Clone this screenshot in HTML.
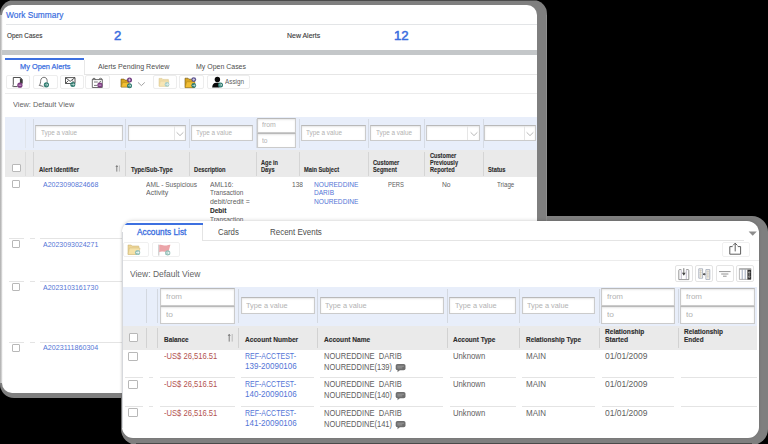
<!DOCTYPE html><html><head><meta charset="utf-8"><title>Work Summary</title><style>
html,body{margin:0;padding:0;background:#000;width:768px;height:444px;overflow:hidden}
body{position:relative;font-family:"Liberation Sans", sans-serif}
.a{position:absolute}
svg.a{overflow:visible}
.t{position:absolute;white-space:pre;line-height:0;height:0;transform-origin:0 0;-webkit-text-stroke:0px currentColor}

</style></head><body>
<div class="a" style="left:120.50px;top:215.80px;width:647.10px;height:228.80px;background:#7f7f7f;border-radius:16px"></div>
<div class="a" style="left:136.00px;top:443.20px;width:616.00px;height:0.80px;background:#4a4a4a"></div>
<div class="a" style="left:0.00px;top:0.00px;width:547.20px;height:397.60px;background:#7f7f7f;border-radius:14px"></div>
<div class="a" style="left:10.00px;top:0.00px;width:526.00px;height:0.90px;background:#4a4a4a"></div>
<div class="a" style="left:1.80px;top:5.00px;width:535.70px;height:387.60px;background:#fff;border-radius:10px"></div>
<div class="a" style="left:0.00px;top:15.00px;width:2.80px;height:368.00px;background:linear-gradient(to right,#b3b3b3 0px,#bcbcbc 1px,#e6e6e6 2px,#fff 2.8px)"></div>
<div class="a" style="left:545.60px;top:15.00px;width:1.00px;height:369.00px;background:#8e8e8e"></div>
<div class="t" style="left:6.20px;top:15px;font-size:9.8px;color:#3a6ee0;font-weight:400;transform:scale(0.8524,1.0000);transform-origin:0 3px;-webkit-text-stroke:0.2px currentColor">Work Summary</div>
<div class="a" style="left:5.60px;top:23.60px;width:531.90px;height:1.40px;background:#e3e5e7"></div>
<div class="t" style="left:6.80px;top:36px;font-size:6.9px;color:#3a3a3a;font-weight:400;transform:scale(0.9229,1.0000);transform-origin:0 2px;-webkit-text-stroke:0.12px currentColor">Open Cases</div>
<div class="t" style="left:113.90px;top:36px;font-size:13.5px;color:#3a6ee0;font-weight:400;transform:scale(0.9726,1.0000);transform-origin:0 4px;-webkit-text-stroke:0.55px currentColor">2</div>
<div class="t" style="left:286.70px;top:36px;font-size:6.9px;color:#3a3a3a;font-weight:400;transform:scale(1.0099,1.0000);transform-origin:0 2px;-webkit-text-stroke:0.12px currentColor">New Alerts</div>
<div class="t" style="left:394.40px;top:36px;font-size:13.5px;color:#3a6ee0;font-weight:400;transform:scale(0.9726,1.0000);transform-origin:0 4px;-webkit-text-stroke:0.55px currentColor">12</div>
<div class="a" style="left:1.80px;top:50.40px;width:535.70px;height:5.00px;background:#c4c7c9"></div>
<div class="a" style="left:5.30px;top:58.10px;width:78.70px;height:2.10px;background:#3d70e0"></div>
<div class="a" style="left:83.80px;top:60.00px;width:1.00px;height:14.00px;background:#e8e8e8"></div>
<div class="a" style="left:84.00px;top:73.50px;width:453.20px;height:1.00px;background:#e6e6e6"></div>
<div class="t" style="left:19.50px;top:67px;font-size:7.8px;color:#3a6ee0;font-weight:400;transform:scale(0.9471,1.0000);transform-origin:0 2px;-webkit-text-stroke:0.25px currentColor">My Open Alerts</div>
<div class="t" style="left:97.60px;top:67px;font-size:7.8px;color:#4e4e4e;font-weight:400;transform:scale(0.9097,1.0000);transform-origin:0 2px;">Alerts Pending Review</div>
<div class="t" style="left:196.00px;top:67px;font-size:7.8px;color:#4e4e4e;font-weight:400;transform:scale(0.8942,1.0000);transform-origin:0 2px;">My Open Cases</div>
<div class="a" style="left:5.90px;top:74.80px;width:24.50px;height:14.50px;background:#fff;border:1px solid #ededed;box-sizing:border-box;border-radius:2px"></div>
<div class="a" style="left:32.50px;top:74.80px;width:25.00px;height:14.50px;background:#fff;border:1px solid #ededed;box-sizing:border-box;border-radius:2px"></div>
<div class="a" style="left:59.50px;top:74.80px;width:24.50px;height:14.50px;background:#fff;border:1px solid #ededed;box-sizing:border-box;border-radius:2px"></div>
<div class="a" style="left:85.40px;top:74.80px;width:25.00px;height:14.50px;background:#fff;border:1px solid #ededed;box-sizing:border-box;border-radius:2px"></div>
<div class="a" style="left:153.00px;top:74.80px;width:24.00px;height:14.50px;background:#fff;border:1px solid #ededed;box-sizing:border-box;border-radius:2px"></div>
<div class="a" style="left:179.40px;top:74.80px;width:24.80px;height:14.50px;background:#fff;border:1px solid #ededed;box-sizing:border-box;border-radius:2px"></div>
<div class="a" style="left:206.80px;top:74.80px;width:43.40px;height:14.50px;background:#fff;border:1px solid #ededed;box-sizing:border-box;border-radius:2px"></div>
<div class="a" style="left:5.40px;top:93.20px;width:532.10px;height:1.00px;background:#ececec"></div>
<div class="t" style="left:225.00px;top:82px;font-size:7.2px;color:#606060;font-weight:400;transform:scale(0.8793,1.0000);transform-origin:0 2px;">Assign</div>
<div class="t" style="left:13.40px;top:105px;font-size:7.4px;color:#646464;font-weight:400;transform:scale(0.9976,1.0000);transform-origin:0 2px;">View: Default View</div>
<svg class="a" style="left:0;top:0" width="768" height="444" viewBox="0 0 768 444"><path d="M13.3 77.5 H20.3 L22.2 79.3 V83.6 M13.3 77.5 V84.4 Q13.3 85.5 12.5 86.1 Q12.7 86.6 13.4 86.6 H17.6" fill="none" stroke="#333" stroke-width="0.85"/><path d="M19.9 77.9 L22.3 79.4 V83.6 H19.9 Z" fill="#3c3c3c"/><circle cx="19.90" cy="85.20" r="2.6" fill="#7c3b80"/><path d="M18.47 85.20 H21.33" stroke="#d8b8da" stroke-width="0.9"/><path d="M39.2 85.4 C40.5 84.2 40.5 82 40.7 80.3 C41 78.3 42.4 77.3 44 77.3 C45.6 77.3 46.9 78.3 47.1 80.3 C47.2 81.4 47.2 82.1 47.3 82.6 M39.2 85.4 L42.6 86.2 L43.8 87.4" fill="none" stroke="#555" stroke-width="0.8"/><circle cx="46.40" cy="84.80" r="2.6" fill="#2d7a6e"/><path d="M44.84 84.80 H47.96 M46.40 83.63 L47.96 84.80 L46.40 85.97" stroke="#cfe3df" stroke-width="0.7" fill="none"/><path d="M65.5 77.6 H75 V83.5 H65.5 Z M65.6 77.7 L70.2 81.3 L74.9 77.7 M65.6 83.3 L68.4 80.6 M74.9 83.3 L72.1 80.6" fill="none" stroke="#3a3a3a" stroke-width="0.85"/><circle cx="72.80" cy="84.50" r="2.5" fill="#2d7a6e"/><path d="M71.30 84.50 H74.30 M72.80 83.38 L74.30 84.50 L72.80 85.62" stroke="#cfe3df" stroke-width="0.7" fill="none"/><path d="M92.3 79.6 H102.3 V87.5 H92.3 Z" fill="none" stroke="#555" stroke-width="0.85"/><path d="M92.4 79.6 C92.6 77.8 95.4 77.8 95.6 79.6 M99 79.6 C99.2 77.8 102 77.8 102.2 79.6" fill="none" stroke="#555" stroke-width="0.85"/><path d="M94 82 H97.8 M94 85.4 H97.4 M98.6 82.8 L101 81.2" stroke="#555" stroke-width="0.8"/><circle cx="99.90" cy="85.10" r="2.6" fill="#7c3b80"/><path d="M98.47 85.10 H101.33" stroke="#d8b8da" stroke-width="0.9"/><path d="M121 79.1 H124 L125 80.1 H128.6 V87 H121 Z" fill="#d9a521" stroke="#6b5212" stroke-width="0.6"/><path d="M122.6 82.4 H129.4 L127.8 87 H121.2 Z" fill="#f2be33" stroke="#9a7616" stroke-width="0.4"/><circle cx="129.50" cy="80.00" r="2.5" fill="#6f3a7e"/><path d="M128.12 80.00 H130.88 M129.50 78.62 V81.38" stroke="#e0cfe6" stroke-width="0.8"/><circle cx="129.50" cy="85.70" r="2.5" fill="#2d7a6e"/><path d="M128.00 85.70 H131.00 M129.50 84.58 L131.00 85.70 L129.50 86.83" stroke="#cfe3df" stroke-width="0.7" fill="none"/><path d="M138 82.4 L141.4 85.6 L144.8 82.4" fill="none" stroke="#8a8a8a" stroke-width="0.8"/><path d="M159 78.4 H162 L163 79.4 H168.4 V86.2 H159 Z" fill="#efdca8" stroke="#d9c48a" stroke-width="0.5"/><path d="M160.4 81.2 H169 L167.8 86.2 H159.2 Z" fill="#f7e6b6" stroke="#e0cc94" stroke-width="0.4"/><circle cx="167.00" cy="84.40" r="2.4" fill="#a9cfc9"/><path d="M165.56 84.40 H168.44 M167.00 83.32 L168.44 84.40 L167.00 85.48" stroke="#e8f2f0" stroke-width="0.7" fill="none"/><path d="M185 78.2 H188 L189 79.2 H194.5 V87.6 H185 Z" fill="#d9a521" stroke="#6b5212" stroke-width="0.6"/><path d="M186.6 81.8 H195 L193.6 87.6 H185.2 Z" fill="#f2be33" stroke="#9a7616" stroke-width="0.4"/><circle cx="193.75" cy="79.60" r="2.4" fill="#5c5490"/><path d="M192.43 79.60 H195.07 M193.75 78.28 V80.92" stroke="#dcd8ee" stroke-width="0.8"/><circle cx="193.75" cy="85.50" r="2.4" fill="#2d7a6e"/><path d="M192.31 85.50 H195.19 M193.75 84.42 L195.19 85.50 L193.75 86.58" stroke="#cfe3df" stroke-width="0.7" fill="none"/><circle cx="217.4" cy="79.5" r="2.7" fill="#0a0a0a"/><path d="M212.2 87.6 C212.2 84.4 213.8 82.8 216.2 82.8 H218.6 C219.6 82.8 220.4 83.2 220.8 83.8 L219.4 87.6 Z" fill="#0a0a0a"/><circle cx="220.50" cy="84.90" r="2.5" fill="#2d7a6e"/><path d="M219.00 84.90 H222.00 M220.50 83.78 L222.00 84.90 L220.50 86.03" stroke="#cfe3df" stroke-width="0.7" fill="none"/></svg>
<div class="a" style="left:5.40px;top:116.50px;width:532.10px;height:33.90px;background:#e8eefa"></div>
<div class="a" style="left:5.40px;top:150.40px;width:532.10px;height:26.90px;background:#eaeaea"></div>
<div class="a" style="left:25.20px;top:118.50px;width:1.00px;height:29.00px;background:#e0e4eb"></div>
<div class="a" style="left:25.20px;top:152.20px;width:1.00px;height:23.40px;background:#dcdcdc"></div>
<div class="a" style="left:33.30px;top:118.50px;width:1.00px;height:29.00px;background:#d6dbe4"></div>
<div class="a" style="left:33.30px;top:152.20px;width:1.00px;height:23.40px;background:#d5d5d5"></div>
<div class="a" style="left:125.30px;top:118.50px;width:1.00px;height:29.00px;background:#d6dbe4"></div>
<div class="a" style="left:125.30px;top:152.20px;width:1.00px;height:23.40px;background:#d5d5d5"></div>
<div class="a" style="left:188.70px;top:118.50px;width:1.00px;height:29.00px;background:#d6dbe4"></div>
<div class="a" style="left:188.70px;top:152.20px;width:1.00px;height:23.40px;background:#d5d5d5"></div>
<div class="a" style="left:255.50px;top:118.50px;width:1.00px;height:29.00px;background:#d6dbe4"></div>
<div class="a" style="left:255.50px;top:152.20px;width:1.00px;height:23.40px;background:#d5d5d5"></div>
<div class="a" style="left:298.70px;top:118.50px;width:1.00px;height:29.00px;background:#d6dbe4"></div>
<div class="a" style="left:298.70px;top:152.20px;width:1.00px;height:23.40px;background:#d5d5d5"></div>
<div class="a" style="left:368.00px;top:118.50px;width:1.00px;height:29.00px;background:#d6dbe4"></div>
<div class="a" style="left:368.00px;top:152.20px;width:1.00px;height:23.40px;background:#d5d5d5"></div>
<div class="a" style="left:424.30px;top:118.50px;width:1.00px;height:29.00px;background:#d6dbe4"></div>
<div class="a" style="left:424.30px;top:152.20px;width:1.00px;height:23.40px;background:#d5d5d5"></div>
<div class="a" style="left:482.50px;top:118.50px;width:1.00px;height:29.00px;background:#d6dbe4"></div>
<div class="a" style="left:482.50px;top:152.20px;width:1.00px;height:23.40px;background:#d5d5d5"></div>
<div class="a" style="left:35.40px;top:125.20px;width:87.20px;height:15.40px;background:#fff;border:1px solid #cbcbcb;border-top-color:#b9b9b9;box-sizing:border-box;box-shadow:inset 0 1px 2px rgba(0,0,0,.1)"></div>
<div class="t" style="left:40.60px;top:133px;font-size:6.8px;color:#b2b2b2;font-weight:400;transform:scale(0.9337,1.0000);transform-origin:0 2px;">Type a value</div>
<div class="a" style="left:127.50px;top:125.20px;width:58.80px;height:15.40px;background:#fff;border:1px solid #cbcbcb;border-top-color:#b9b9b9;box-sizing:border-box;box-shadow:inset 0 1px 2px rgba(0,0,0,.1)"></div>
<div class="a" style="left:174.00px;top:126.20px;width:1.00px;height:13.40px;background:#e6e6e6"></div>
<svg class="a" style="left:175.35px;top:130.80px" width="10" height="6" viewBox="0 0 10 6"><path d="M1.6 1.3 L5 4.6 L8.4 1.3" fill="none" stroke="#ababab" stroke-width="0.85"/></svg>
<div class="a" style="left:191.00px;top:125.20px;width:62.00px;height:15.40px;background:#fff;border:1px solid #cbcbcb;border-top-color:#b9b9b9;box-sizing:border-box;box-shadow:inset 0 1px 2px rgba(0,0,0,.1)"></div>
<div class="t" style="left:196.20px;top:133px;font-size:6.8px;color:#b2b2b2;font-weight:400;transform:scale(0.9337,1.0000);transform-origin:0 2px;">Type a value</div>
<div class="a" style="left:257.30px;top:117.50px;width:38.60px;height:15.70px;background:#fff;border:1px solid #cbcbcb;border-top-color:#b9b9b9;box-sizing:border-box;box-shadow:inset 0 1px 2px rgba(0,0,0,.1)"></div>
<div class="t" style="left:262.40px;top:125px;font-size:6.8px;color:#b2b2b2;font-weight:400;transform:scale(1.0147,1.0000);transform-origin:0 2px;">from</div>
<div class="a" style="left:257.30px;top:133.20px;width:38.60px;height:15.20px;background:#fff;border:1px solid #cbcbcb;border-top-color:#b9b9b9;box-sizing:border-box;box-shadow:inset 0 1px 2px rgba(0,0,0,.1)"></div>
<div class="t" style="left:262.40px;top:141px;font-size:6.8px;color:#b2b2b2;font-weight:400;transform:scale(0.9698,1.0000);transform-origin:0 2px;">to</div>
<div class="a" style="left:300.50px;top:125.20px;width:65.00px;height:15.40px;background:#fff;border:1px solid #cbcbcb;border-top-color:#b9b9b9;box-sizing:border-box;box-shadow:inset 0 1px 2px rgba(0,0,0,.1)"></div>
<div class="t" style="left:305.70px;top:133px;font-size:6.8px;color:#b2b2b2;font-weight:400;transform:scale(0.9337,1.0000);transform-origin:0 2px;">Type a value</div>
<div class="a" style="left:370.40px;top:125.20px;width:50.80px;height:15.40px;background:#fff;border:1px solid #cbcbcb;border-top-color:#b9b9b9;box-sizing:border-box;box-shadow:inset 0 1px 2px rgba(0,0,0,.1)"></div>
<div class="t" style="left:375.60px;top:133px;font-size:6.8px;color:#b2b2b2;font-weight:400;transform:scale(0.9337,1.0000);transform-origin:0 2px;">Type a value</div>
<div class="a" style="left:426.10px;top:125.20px;width:53.70px;height:15.40px;background:#fff;border:1px solid #cbcbcb;border-top-color:#b9b9b9;box-sizing:border-box;box-shadow:inset 0 1px 2px rgba(0,0,0,.1)"></div>
<div class="a" style="left:467.30px;top:126.20px;width:1.00px;height:13.40px;background:#e6e6e6"></div>
<svg class="a" style="left:468.75px;top:130.80px" width="10" height="6" viewBox="0 0 10 6"><path d="M1.6 1.3 L5 4.6 L8.4 1.3" fill="none" stroke="#ababab" stroke-width="0.85"/></svg>
<div class="a" style="left:484.30px;top:125.20px;width:51.30px;height:15.40px;background:#fff;border:1px solid #cbcbcb;border-top-color:#b9b9b9;box-sizing:border-box;box-shadow:inset 0 1px 2px rgba(0,0,0,.1)"></div>
<div class="a" style="left:523.50px;top:126.20px;width:1.00px;height:13.40px;background:#e6e6e6"></div>
<svg class="a" style="left:524.75px;top:130.80px" width="10" height="6" viewBox="0 0 10 6"><path d="M1.6 1.3 L5 4.6 L8.4 1.3" fill="none" stroke="#ababab" stroke-width="0.85"/></svg>
<div class="a" style="left:12.20px;top:164.30px;width:8.50px;height:8.20px;background:#fff;border:1px solid #b8b8b8;box-sizing:border-box;border-radius:1px"></div>
<div class="t" style="left:38.90px;top:170px;font-size:6.8px;color:#2c2c2c;font-weight:700;transform:scale(0.8699,1.0000);transform-origin:0 2px;-webkit-text-stroke:0.12px currentColor;">Alert Identifier</div>
<div class="t" style="left:130.80px;top:170px;font-size:6.8px;color:#2c2c2c;font-weight:700;transform:scale(0.8737,1.0000);transform-origin:0 2px;-webkit-text-stroke:0.12px currentColor;">Type/Sub-Type</div>
<div class="t" style="left:194.30px;top:170px;font-size:6.8px;color:#2c2c2c;font-weight:700;transform:scale(0.8448,1.0000);transform-origin:0 2px;-webkit-text-stroke:0.12px currentColor;">Description</div>
<div class="t" style="left:260.80px;top:163px;font-size:6.8px;color:#2c2c2c;font-weight:700;transform:scale(0.8181,1.0000);transform-origin:0 2px;-webkit-text-stroke:0.12px currentColor;">Age in</div>
<div class="t" style="left:260.80px;top:170px;font-size:6.8px;color:#2c2c2c;font-weight:700;transform:scale(0.8365,1.0000);transform-origin:0 2px;-webkit-text-stroke:0.12px currentColor;">Days</div>
<div class="t" style="left:303.90px;top:170px;font-size:6.8px;color:#2c2c2c;font-weight:700;transform:scale(0.8369,1.0000);transform-origin:0 2px;-webkit-text-stroke:0.12px currentColor;">Main Subject</div>
<div class="t" style="left:373.40px;top:163px;font-size:6.8px;color:#2c2c2c;font-weight:700;transform:scale(0.8285,1.0000);transform-origin:0 2px;-webkit-text-stroke:0.12px currentColor;">Customer</div>
<div class="t" style="left:373.40px;top:170px;font-size:6.8px;color:#2c2c2c;font-weight:700;transform:scale(0.8288,1.0000);transform-origin:0 2px;-webkit-text-stroke:0.12px currentColor;">Segment</div>
<div class="t" style="left:430.00px;top:156px;font-size:6.8px;color:#2c2c2c;font-weight:700;transform:scale(0.8254,1.0000);transform-origin:0 2px;-webkit-text-stroke:0.12px currentColor;">Customer</div>
<div class="t" style="left:430.00px;top:163px;font-size:6.8px;color:#2c2c2c;font-weight:700;transform:scale(0.8141,1.0000);transform-origin:0 2px;-webkit-text-stroke:0.12px currentColor;">Previously</div>
<div class="t" style="left:430.00px;top:170px;font-size:6.8px;color:#2c2c2c;font-weight:700;transform:scale(0.8310,1.0000);transform-origin:0 2px;-webkit-text-stroke:0.12px currentColor;">Reported</div>
<div class="t" style="left:487.50px;top:170px;font-size:6.8px;color:#2c2c2c;font-weight:700;transform:scale(0.8421,1.0000);transform-origin:0 2px;-webkit-text-stroke:0.12px currentColor;">Status</div>
<svg class="a" style="left:0;top:0" width="768" height="444" viewBox="0 0 768 444"><path d="M116.8 171.6 V165.8 M115.9 166.9 L116.8 165.6 L117.7 166.9" stroke="#555" stroke-width="0.7" fill="none"/><path d="M119.4 165.4 V171.6" stroke="#aaa" stroke-width="0.7"/></svg>
<div class="a" style="left:12.20px;top:180.00px;width:8.10px;height:8.00px;background:#fff;border:1px solid #b8b8b8;box-sizing:border-box;border-radius:1px"></div>
<div class="t" style="left:43.00px;top:185px;font-size:7.2px;color:#5475d6;font-weight:400;transform:scale(0.9744,1.0000);transform-origin:0 2px;">A2023090824668</div>
<div class="t" style="left:146.40px;top:185px;font-size:7.2px;color:#606060;font-weight:400;transform:scale(0.9165,1.0000);transform-origin:0 2px;">AML - Suspicious</div>
<div class="t" style="left:146.40px;top:193px;font-size:7.2px;color:#606060;font-weight:400;transform:scale(0.9780,1.0000);transform-origin:0 2px;">Activity</div>
<div class="t" style="left:209.60px;top:185px;font-size:7.2px;color:#606060;font-weight:400;transform:scale(0.9431,1.0000);transform-origin:0 2px;">AML16:</div>
<div class="t" style="left:209.60px;top:193px;font-size:7.2px;color:#606060;font-weight:400;transform:scale(0.8968,1.0000);transform-origin:0 2px;">Transaction</div>
<div class="t" style="left:209.60px;top:202px;font-size:7.2px;color:#606060;font-weight:400;transform:scale(0.9609,1.0000);transform-origin:0 2px;">debit/credit =</div>
<div class="t" style="left:209.60px;top:211px;font-size:7.2px;color:#2c2c2c;font-weight:700;transform:scale(0.9111,1.0000);transform-origin:0 2px;-webkit-text-stroke:0.12px currentColor;">Debit</div>
<div class="t" style="left:209.60px;top:220px;font-size:7.2px;color:#606060;font-weight:400;transform:scale(0.8968,1.0000);transform-origin:0 2px;">Transaction</div>
<div class="t" style="left:292.40px;top:185px;font-size:7.2px;color:#606060;font-weight:400;transform:scale(0.9159,1.0000);transform-origin:0 2px;">138</div>
<div class="t" style="left:313.90px;top:185px;font-size:7.2px;color:#5475d6;font-weight:400;transform:scale(0.9193,1.0000);transform-origin:0 2px;">NOUREDDINE</div>
<div class="t" style="left:313.90px;top:193px;font-size:7.2px;color:#5475d6;font-weight:400;transform:scale(0.9135,1.0000);transform-origin:0 2px;">DARIB</div>
<div class="t" style="left:313.90px;top:202px;font-size:7.2px;color:#5475d6;font-weight:400;transform:scale(0.9193,1.0000);transform-origin:0 2px;">NOUREDDINE</div>
<div class="t" style="left:388.10px;top:185px;font-size:7.2px;color:#606060;font-weight:400;transform:scale(0.8110,1.0000);transform-origin:0 2px;">PERS</div>
<div class="t" style="left:441.80px;top:185px;font-size:7.2px;color:#606060;font-weight:400;transform:scale(0.9346,1.0000);transform-origin:0 2px;">No</div>
<div class="t" style="left:497.00px;top:185px;font-size:7.2px;color:#606060;font-weight:400;transform:scale(0.8591,1.0000);transform-origin:0 2px;">Triage</div>
<div class="a" style="left:8.50px;top:238.00px;width:15.80px;height:1.00px;background:#e4e4e4"></div>
<div class="a" style="left:30.00px;top:238.00px;width:4.50px;height:1.00px;background:#e4e4e4"></div>
<div class="a" style="left:40.20px;top:238.00px;width:497.30px;height:1.00px;background:#e4e4e4"></div>
<div class="a" style="left:8.50px;top:281.00px;width:15.80px;height:1.00px;background:#e4e4e4"></div>
<div class="a" style="left:30.00px;top:281.00px;width:4.50px;height:1.00px;background:#e4e4e4"></div>
<div class="a" style="left:40.20px;top:281.00px;width:497.30px;height:1.00px;background:#e4e4e4"></div>
<div class="a" style="left:8.50px;top:342.00px;width:15.80px;height:1.00px;background:#e4e4e4"></div>
<div class="a" style="left:30.00px;top:342.00px;width:4.50px;height:1.00px;background:#e4e4e4"></div>
<div class="a" style="left:40.20px;top:342.00px;width:497.30px;height:1.00px;background:#e4e4e4"></div>
<div class="a" style="left:12.20px;top:240.30px;width:8.20px;height:8.10px;background:#fff;border:1px solid #b8b8b8;box-sizing:border-box;border-radius:1px"></div>
<div class="t" style="left:43.00px;top:245px;font-size:7.2px;color:#5475d6;font-weight:400;transform:scale(0.9744,1.0000);transform-origin:0 2px;">A2023093024271</div>
<div class="a" style="left:12.20px;top:283.30px;width:8.10px;height:8.10px;background:#fff;border:1px solid #b8b8b8;box-sizing:border-box;border-radius:1px"></div>
<div class="t" style="left:43.00px;top:288px;font-size:7.2px;color:#5475d6;font-weight:400;transform:scale(0.9744,1.0000);transform-origin:0 2px;">A2023103161730</div>
<div class="a" style="left:12.20px;top:344.20px;width:8.10px;height:8.10px;background:#fff;border:1px solid #b8b8b8;box-sizing:border-box;border-radius:1px"></div>
<div class="t" style="left:43.00px;top:348px;font-size:7.2px;color:#5475d6;font-weight:400;transform:scale(0.9930,1.0000);transform-origin:0 2px;">A2023111860304</div>
<div class="a" style="left:122px;top:221.3px;width:637.3px;height:216.7px;background:#fff;border-radius:11px 12px 11px 11px;box-shadow:0 -1px 4px -1px rgba(0,0,0,.2),-1px 0 2px rgba(0,0,0,.06)"></div>
<div class="a" style="left:0;top:0;width:768px;height:444px;clip-path:inset(221.3px 8.7px 6px 122px round 11px)">
<div class="a" style="left:122.00px;top:222.60px;width:80.50px;height:2.30px;background:#3d70e0"></div>
<div class="a" style="left:202.20px;top:224.50px;width:1.00px;height:16.10px;background:#e4e4e4"></div>
<div class="a" style="left:202.50px;top:240.20px;width:541.50px;height:1.00px;background:#e4e4e4"></div>
<div class="t" style="left:136.75px;top:232px;font-size:8.4px;color:#3a6ee0;font-weight:400;transform:scale(0.9909,1.0000);transform-origin:0 3px;-webkit-text-stroke:0.3px currentColor">Accounts List</div>
<div class="t" style="left:217.70px;top:232px;font-size:8.4px;color:#4e4e4e;font-weight:400;transform:scale(0.9326,1.0000);transform-origin:0 3px;">Cards</div>
<div class="t" style="left:269.50px;top:232px;font-size:8.4px;color:#4e4e4e;font-weight:400;transform:scale(0.9519,1.0000);transform-origin:0 3px;">Recent Events</div>
<svg class="a" style="left:0;top:0" width="768" height="444" viewBox="0 0 768 444"><path d="M748.6 231.4 H756.8 L752.7 235.8 Z" fill="#8c8c8c"/></svg>
<div class="a" style="left:123.20px;top:241.60px;width:26.10px;height:15.60px;background:#fff;border:1px solid #f0f0f0;box-sizing:border-box;border-radius:2px"></div>
<div class="a" style="left:151.70px;top:241.60px;width:28.50px;height:15.60px;background:#fff;border:1px solid #f0f0f0;box-sizing:border-box;border-radius:2px"></div>
<div class="a" style="left:722.30px;top:241.50px;width:28.10px;height:15.70px;background:#fff;border:1px solid #f0f0f0;box-sizing:border-box;border-radius:2px"></div>
<div class="a" style="left:122.00px;top:260.30px;width:637.30px;height:1.00px;background:#ececec"></div>
<div class="t" style="left:130.20px;top:274px;font-size:8.5px;color:#646464;font-weight:400;transform:scale(0.9960,1.0000);transform-origin:0 3px;">View: Default View</div>
<div class="a" style="left:674.90px;top:265.40px;width:18.00px;height:16.90px;background:#fff;border:1px solid #e4e4e4;box-sizing:border-box;border-radius:2px"></div>
<div class="a" style="left:695.20px;top:265.40px;width:17.80px;height:16.90px;background:#fff;border:1px solid #e4e4e4;box-sizing:border-box;border-radius:2px"></div>
<div class="a" style="left:716.00px;top:265.40px;width:17.50px;height:16.90px;background:#fff;border:1px solid #e4e4e4;box-sizing:border-box;border-radius:2px"></div>
<div class="a" style="left:736.30px;top:265.40px;width:18.10px;height:16.90px;background:#fff;border:1px solid #e4e4e4;box-sizing:border-box;border-radius:2px"></div>
<svg class="a" style="left:0;top:0" width="768" height="444" viewBox="0 0 768 444"><path d="M128 245 H131.2 L132.2 246 H138.8 V254.4 H128 Z" fill="#eed596" stroke="#c9b377" stroke-width="0.55"/><path d="M129.4 248 H140 L138.8 254.4 H128 Z" fill="#f6e2a8" stroke="#cdb87c" stroke-width="0.5"/><circle cx="137.60" cy="252.50" r="2.6" fill="#93c0b8"/><path d="M136.04 252.50 H139.16 M137.60 251.33 L139.16 252.50 L137.60 253.67" stroke="#fff" stroke-width="0.7" fill="none"/><path d="M158.8 244.6 V255.6" stroke="#bbb" stroke-width="0.9"/><path d="M159.2 245 C162 244 164 246.2 166.6 245.4 C168 245 169.6 244.6 170.4 244.8 L168.6 251.6 C166.6 252.2 164 251.4 162 251.6 C160.6 251.8 159.8 252 159.2 252.2 Z" fill="#eba4a8"/><circle cx="167.70" cy="252.90" r="2.6" fill="#93c0b8"/><path d="M166.14 252.90 H169.26 M167.70 251.73 L169.26 252.90 L167.70 254.07" stroke="#fff" stroke-width="0.7" fill="none"/><path d="M732.6 246.6 H729.8 V254.2 H740.6 V246.6 H737.8 M735.2 243.2 V251.4 M733 245.4 L735.2 243.2 L737.4 245.4" fill="none" stroke="#555" stroke-width="0.95" stroke-linejoin="round"/><path d="M681.4 269.6 H679.6 Q678.8 269.6 678.8 270.4 V279.6 H688.8 V270.4 Q688.8 269.6 688 269.6 H686.2" fill="none" stroke="#7c7c7c" stroke-width="0.8"/><path d="M681.3 270.2 V279.4 M686.3 270.2 V279.4" stroke="#a9a0b8" stroke-width="0.7"/><path d="M683.8 268.2 V275.2" stroke="#666" stroke-width="0.9"/><path d="M681.9 272.8 L683.8 275.6 L685.7 272.8 Z" fill="#444"/><path d="M698.8 268.8 H702.6 V278.2 H698.8 Z M705.9 269.6 H709.8 V279.4 H705.9 Z" fill="#fff" stroke="#8e96a6" stroke-width="0.7"/><path d="M700.7 269.4 V277.6 M707.9 270.2 V278.8" stroke="#d8c79a" stroke-width="0.7"/><path d="M699.2 270.6 H702.2 M699.2 272.4 H702.2 M699.2 274.2 H702.2 M699.2 276 H702.2 M706.3 271.4 H709.4 M706.3 273.2 H709.4 M706.3 275 H709.4 M706.3 276.8 H709.4" stroke="#b4b4b4" stroke-width="0.5"/><path d="M703 274.2 H705.8" stroke="#555" stroke-width="0.8"/><path d="M702.8 274.2 L704.6 272.8 V275.6 Z" fill="#333"/><path d="M719 271.6 H730.6 M721.2 274 H728.4 M723 276.2 H726.6" stroke="#777" stroke-width="0.8"/><path d="M739.4 268.6 H751 V279.4 H739.4 Z" fill="#fff" stroke="#9a9a9a" stroke-width="0.7"/><path d="M739.6 268.4 H750.8 V269.8 H739.6 Z" fill="#aaa"/><path d="M742.2 269.6 V279.4 M745.2 269.6 V279.4" stroke="#7a8aa8" stroke-width="0.7"/><path d="M747.4 269.8 H751 V279.4 H747.4 Z" fill="#333"/><path d="M749.2 271.6 V277.6 M748.2 273 L749.2 271.6 L750.2 273 M748.2 276.2 L749.2 277.6 L750.2 276.2" stroke="#ddd" stroke-width="0.5" fill="none"/></svg>
<div class="a" style="left:122.00px;top:286.60px;width:635.00px;height:39.10px;background:#e8eefa"></div>
<div class="a" style="left:122.00px;top:325.70px;width:635.00px;height:23.90px;background:#eaeaea"></div>
<div class="a" style="left:146.20px;top:289.00px;width:1.00px;height:34.00px;background:#d3d8e0"></div>
<div class="a" style="left:146.20px;top:328.00px;width:1.00px;height:19.50px;background:#d2d2d2"></div>
<div class="a" style="left:157.00px;top:289.00px;width:1.00px;height:34.00px;background:#d3d8e0"></div>
<div class="a" style="left:157.00px;top:328.00px;width:1.00px;height:19.50px;background:#d2d2d2"></div>
<div class="a" style="left:238.30px;top:289.00px;width:1.00px;height:34.00px;background:#d3d8e0"></div>
<div class="a" style="left:238.30px;top:328.00px;width:1.00px;height:19.50px;background:#d2d2d2"></div>
<div class="a" style="left:317.40px;top:289.00px;width:1.00px;height:34.00px;background:#d3d8e0"></div>
<div class="a" style="left:317.40px;top:328.00px;width:1.00px;height:19.50px;background:#d2d2d2"></div>
<div class="a" style="left:447.00px;top:289.00px;width:1.00px;height:34.00px;background:#d3d8e0"></div>
<div class="a" style="left:447.00px;top:328.00px;width:1.00px;height:19.50px;background:#d2d2d2"></div>
<div class="a" style="left:519.20px;top:289.00px;width:1.00px;height:34.00px;background:#d3d8e0"></div>
<div class="a" style="left:519.20px;top:328.00px;width:1.00px;height:19.50px;background:#d2d2d2"></div>
<div class="a" style="left:598.50px;top:289.00px;width:1.00px;height:34.00px;background:#d3d8e0"></div>
<div class="a" style="left:598.50px;top:328.00px;width:1.00px;height:19.50px;background:#d2d2d2"></div>
<div class="a" style="left:677.50px;top:289.00px;width:1.00px;height:34.00px;background:#d3d8e0"></div>
<div class="a" style="left:677.50px;top:328.00px;width:1.00px;height:19.50px;background:#d2d2d2"></div>
<div class="a" style="left:160.30px;top:288.20px;width:75.20px;height:17.60px;background:#fff;border:1px solid #cbcbcb;border-top-color:#b9b9b9;box-sizing:border-box;box-shadow:inset 0 1px 2px rgba(0,0,0,.1)"></div>
<div class="t" style="left:166.30px;top:297px;font-size:7.6px;color:#b2b2b2;font-weight:400;transform:scale(1.0526,1.0000);transform-origin:0 2px;">from</div>
<div class="a" style="left:160.30px;top:305.80px;width:75.20px;height:18.00px;background:#fff;border:1px solid #cbcbcb;border-top-color:#b9b9b9;box-sizing:border-box;box-shadow:inset 0 1px 2px rgba(0,0,0,.1)"></div>
<div class="t" style="left:166.30px;top:315px;font-size:7.6px;color:#b2b2b2;font-weight:400;transform:scale(1.1044,1.0000);transform-origin:0 2px;">to</div>
<div class="a" style="left:241.00px;top:297.40px;width:73.60px;height:17.10px;background:#fff;border:1px solid #cbcbcb;border-top-color:#b9b9b9;box-sizing:border-box;box-shadow:inset 0 1px 2px rgba(0,0,0,.1)"></div>
<div class="t" style="left:246.20px;top:306px;font-size:7.6px;color:#b2b2b2;font-weight:400;transform:scale(0.9677,1.0000);transform-origin:0 2px;">Type a value</div>
<div class="a" style="left:320.00px;top:297.40px;width:124.00px;height:17.10px;background:#fff;border:1px solid #cbcbcb;border-top-color:#b9b9b9;box-sizing:border-box;box-shadow:inset 0 1px 2px rgba(0,0,0,.1)"></div>
<div class="t" style="left:325.20px;top:306px;font-size:7.6px;color:#b2b2b2;font-weight:400;transform:scale(0.9677,1.0000);transform-origin:0 2px;">Type a value</div>
<div class="a" style="left:449.40px;top:297.40px;width:66.80px;height:17.10px;background:#fff;border:1px solid #cbcbcb;border-top-color:#b9b9b9;box-sizing:border-box;box-shadow:inset 0 1px 2px rgba(0,0,0,.1)"></div>
<div class="t" style="left:454.60px;top:306px;font-size:7.6px;color:#b2b2b2;font-weight:400;transform:scale(0.9677,1.0000);transform-origin:0 2px;">Type a value</div>
<div class="a" style="left:521.60px;top:297.40px;width:73.80px;height:17.10px;background:#fff;border:1px solid #cbcbcb;border-top-color:#b9b9b9;box-sizing:border-box;box-shadow:inset 0 1px 2px rgba(0,0,0,.1)"></div>
<div class="t" style="left:526.80px;top:306px;font-size:7.6px;color:#b2b2b2;font-weight:400;transform:scale(0.9677,1.0000);transform-origin:0 2px;">Type a value</div>
<div class="a" style="left:600.60px;top:288.20px;width:74.50px;height:17.60px;background:#fff;border:1px solid #cbcbcb;border-top-color:#b9b9b9;box-sizing:border-box;box-shadow:inset 0 1px 2px rgba(0,0,0,.1)"></div>
<div class="t" style="left:606.60px;top:297px;font-size:7.6px;color:#b2b2b2;font-weight:400;transform:scale(1.0526,1.0000);transform-origin:0 2px;">from</div>
<div class="a" style="left:600.60px;top:305.80px;width:74.50px;height:18.00px;background:#fff;border:1px solid #cbcbcb;border-top-color:#b9b9b9;box-sizing:border-box;box-shadow:inset 0 1px 2px rgba(0,0,0,.1)"></div>
<div class="t" style="left:606.60px;top:315px;font-size:7.6px;color:#b2b2b2;font-weight:400;transform:scale(1.1044,1.0000);transform-origin:0 2px;">to</div>
<div class="a" style="left:680.40px;top:288.20px;width:74.20px;height:17.60px;background:#fff;border:1px solid #cbcbcb;border-top-color:#b9b9b9;box-sizing:border-box;box-shadow:inset 0 1px 2px rgba(0,0,0,.1)"></div>
<div class="t" style="left:686.40px;top:297px;font-size:7.6px;color:#b2b2b2;font-weight:400;transform:scale(1.0526,1.0000);transform-origin:0 2px;">from</div>
<div class="a" style="left:680.40px;top:305.80px;width:74.20px;height:18.00px;background:#fff;border:1px solid #cbcbcb;border-top-color:#b9b9b9;box-sizing:border-box;box-shadow:inset 0 1px 2px rgba(0,0,0,.1)"></div>
<div class="t" style="left:686.40px;top:315px;font-size:7.6px;color:#b2b2b2;font-weight:400;transform:scale(1.1044,1.0000);transform-origin:0 2px;">to</div>
<div class="a" style="left:128.90px;top:333.20px;width:9.30px;height:9.00px;background:#fff;border:1px solid #b8b8b8;box-sizing:border-box;border-radius:1px"></div>
<div class="t" style="left:163.80px;top:340px;font-size:7.6px;color:#2c2c2c;font-weight:700;transform:scale(0.8440,1.0000);transform-origin:0 2px;-webkit-text-stroke:0.12px currentColor;">Balance</div>
<svg class="a" style="left:0;top:0" width="768" height="444" viewBox="0 0 768 444"><path d="M229.2 341.6 V334.6 M228.2 335.8 L229.2 334.4 L230.2 335.8" stroke="#555" stroke-width="0.75" fill="none"/><path d="M232.2 334 V341.6" stroke="#aaa" stroke-width="0.75"/></svg>
<div class="t" style="left:244.90px;top:340px;font-size:7.6px;color:#2c2c2c;font-weight:700;transform:scale(0.8689,1.0000);transform-origin:0 2px;-webkit-text-stroke:0.12px currentColor;">Account Number</div>
<div class="t" style="left:323.50px;top:340px;font-size:7.6px;color:#2c2c2c;font-weight:700;transform:scale(0.8682,1.0000);transform-origin:0 2px;-webkit-text-stroke:0.12px currentColor;">Account Name</div>
<div class="t" style="left:453.40px;top:340px;font-size:7.6px;color:#2c2c2c;font-weight:700;transform:scale(0.8533,1.0000);transform-origin:0 2px;-webkit-text-stroke:0.12px currentColor;">Account Type</div>
<div class="t" style="left:526.00px;top:340px;font-size:7.6px;color:#2c2c2c;font-weight:700;transform:scale(0.8491,1.0000);transform-origin:0 2px;-webkit-text-stroke:0.12px currentColor;">Relationship Type</div>
<div class="t" style="left:604.80px;top:332px;font-size:7.6px;color:#2c2c2c;font-weight:700;transform:scale(0.8639,1.0000);transform-origin:0 2px;-webkit-text-stroke:0.12px currentColor;">Relationship</div>
<div class="t" style="left:604.80px;top:340px;font-size:7.6px;color:#2c2c2c;font-weight:700;transform:scale(0.8861,1.0000);transform-origin:0 2px;-webkit-text-stroke:0.12px currentColor;">Started</div>
<div class="t" style="left:684.20px;top:332px;font-size:7.6px;color:#2c2c2c;font-weight:700;transform:scale(0.8573,1.0000);transform-origin:0 2px;-webkit-text-stroke:0.12px currentColor;">Relationship</div>
<div class="t" style="left:684.20px;top:340px;font-size:7.6px;color:#2c2c2c;font-weight:700;transform:scale(0.8439,1.0000);transform-origin:0 2px;-webkit-text-stroke:0.12px currentColor;">Ended</div>
<div class="a" style="left:128.30px;top:351.60px;width:9.60px;height:9.30px;background:#fff;border:1px solid #b8b8b8;box-sizing:border-box;border-radius:1px"></div>
<div class="t" style="left:163.80px;top:356px;font-size:8.4px;color:#b3544f;font-weight:400;transform:scale(0.9092,1.0000);transform-origin:0 3px;">-US$ 26,516.51</div>
<div class="t" style="left:245.00px;top:356px;font-size:8.4px;color:#5475d6;font-weight:400;transform:scale(0.8375,1.0000);transform-origin:0 3px;">REF-ACCTEST-</div>
<div class="t" style="left:245.00px;top:366px;font-size:8.4px;color:#5475d6;font-weight:400;transform:scale(0.9578,1.0000);transform-origin:0 3px;">139-20090106</div>
<div class="t" style="left:323.60px;top:356px;font-size:8.4px;color:#606060;font-weight:400;transform:scale(0.8985,1.0000);transform-origin:0 3px;">NOUREDDINE  DARIB</div>
<div class="t" style="left:323.60px;top:367px;font-size:8.4px;color:#606060;font-weight:400;transform:scale(0.8964,1.0000);transform-origin:0 3px;">NOUREDDINE(139)</div>
<svg class="a" style="left:0;top:0" width="768" height="444" viewBox="0 0 768 444"><g transform="translate(395.3 363.6)"><rect x="0.4" y="0.4" width="9.8" height="6.2" rx="1.8" fill="#6e6e6e"/><path d="M2.4 6 L2.2 8.6 L5.2 6 Z" fill="#6e6e6e"/><path d="M2 2.6 H8.6 M2 4.3 H7" stroke="#b8b8b8" stroke-width="0.6"/></g></svg>
<div class="t" style="left:453.40px;top:356px;font-size:8.4px;color:#606060;font-weight:400;transform:scale(0.9223,1.0000);transform-origin:0 3px;">Unknown</div>
<div class="t" style="left:525.80px;top:356px;font-size:8.4px;color:#606060;font-weight:400;transform:scale(0.9524,1.0000);transform-origin:0 3px;">MAIN</div>
<div class="t" style="left:604.70px;top:356px;font-size:8.4px;color:#606060;font-weight:400;transform:scale(1.0109,1.0000);transform-origin:0 3px;">01/01/2009</div>
<div class="a" style="left:128.30px;top:380.00px;width:9.60px;height:9.30px;background:#fff;border:1px solid #b8b8b8;box-sizing:border-box;border-radius:1px"></div>
<div class="t" style="left:163.80px;top:384px;font-size:8.4px;color:#b3544f;font-weight:400;transform:scale(0.9092,1.0000);transform-origin:0 3px;">-US$ 26,516.51</div>
<div class="t" style="left:245.00px;top:384px;font-size:8.4px;color:#5475d6;font-weight:400;transform:scale(0.8375,1.0000);transform-origin:0 3px;">REF-ACCTEST-</div>
<div class="t" style="left:245.00px;top:394px;font-size:8.4px;color:#5475d6;font-weight:400;transform:scale(0.9578,1.0000);transform-origin:0 3px;">140-20090106</div>
<div class="t" style="left:323.60px;top:384px;font-size:8.4px;color:#606060;font-weight:400;transform:scale(0.8985,1.0000);transform-origin:0 3px;">NOUREDDINE  DARIB</div>
<div class="t" style="left:323.60px;top:395px;font-size:8.4px;color:#606060;font-weight:400;transform:scale(0.8964,1.0000);transform-origin:0 3px;">NOUREDDINE(140)</div>
<svg class="a" style="left:0;top:0" width="768" height="444" viewBox="0 0 768 444"><g transform="translate(395.3 391.6)"><rect x="0.4" y="0.4" width="9.8" height="6.2" rx="1.8" fill="#6e6e6e"/><path d="M2.4 6 L2.2 8.6 L5.2 6 Z" fill="#6e6e6e"/><path d="M2 2.6 H8.6 M2 4.3 H7" stroke="#b8b8b8" stroke-width="0.6"/></g></svg>
<div class="t" style="left:453.40px;top:384px;font-size:8.4px;color:#606060;font-weight:400;transform:scale(0.9223,1.0000);transform-origin:0 3px;">Unknown</div>
<div class="t" style="left:525.80px;top:384px;font-size:8.4px;color:#606060;font-weight:400;transform:scale(0.9524,1.0000);transform-origin:0 3px;">MAIN</div>
<div class="t" style="left:604.70px;top:384px;font-size:8.4px;color:#606060;font-weight:400;transform:scale(1.0109,1.0000);transform-origin:0 3px;">01/01/2009</div>
<div class="a" style="left:128.30px;top:408.20px;width:9.60px;height:9.30px;background:#fff;border:1px solid #b8b8b8;box-sizing:border-box;border-radius:1px"></div>
<div class="t" style="left:163.80px;top:413px;font-size:8.4px;color:#b3544f;font-weight:400;transform:scale(0.9092,1.0000);transform-origin:0 3px;">-US$ 26,516.51</div>
<div class="t" style="left:245.00px;top:413px;font-size:8.4px;color:#5475d6;font-weight:400;transform:scale(0.8375,1.0000);transform-origin:0 3px;">REF-ACCTEST-</div>
<div class="t" style="left:245.00px;top:423px;font-size:8.4px;color:#5475d6;font-weight:400;transform:scale(0.9578,1.0000);transform-origin:0 3px;">141-20090106</div>
<div class="t" style="left:323.60px;top:413px;font-size:8.4px;color:#606060;font-weight:400;transform:scale(0.8985,1.0000);transform-origin:0 3px;">NOUREDDINE  DARIB</div>
<div class="t" style="left:323.60px;top:424px;font-size:8.4px;color:#606060;font-weight:400;transform:scale(0.8964,1.0000);transform-origin:0 3px;">NOUREDDINE(141)</div>
<svg class="a" style="left:0;top:0" width="768" height="444" viewBox="0 0 768 444"><g transform="translate(395.3 420.6)"><rect x="0.4" y="0.4" width="9.8" height="6.2" rx="1.8" fill="#6e6e6e"/><path d="M2.4 6 L2.2 8.6 L5.2 6 Z" fill="#6e6e6e"/><path d="M2 2.6 H8.6 M2 4.3 H7" stroke="#b8b8b8" stroke-width="0.6"/></g></svg>
<div class="t" style="left:453.40px;top:413px;font-size:8.4px;color:#606060;font-weight:400;transform:scale(0.9223,1.0000);transform-origin:0 3px;">Unknown</div>
<div class="t" style="left:525.80px;top:413px;font-size:8.4px;color:#606060;font-weight:400;transform:scale(0.9524,1.0000);transform-origin:0 3px;">MAIN</div>
<div class="t" style="left:604.70px;top:413px;font-size:8.4px;color:#606060;font-weight:400;transform:scale(1.0109,1.0000);transform-origin:0 3px;">01/01/2009</div>
<div class="a" style="left:125.00px;top:377.10px;width:17.60px;height:1.00px;background:#e4e4e4"></div>
<div class="a" style="left:149.20px;top:377.10px;width:4.20px;height:1.00px;background:#e4e4e4"></div>
<div class="a" style="left:160.00px;top:377.10px;width:74.70px;height:1.00px;background:#e4e4e4"></div>
<div class="a" style="left:241.30px;top:377.10px;width:72.50px;height:1.00px;background:#e4e4e4"></div>
<div class="a" style="left:320.40px;top:377.10px;width:123.00px;height:1.00px;background:#e4e4e4"></div>
<div class="a" style="left:450.00px;top:377.10px;width:65.60px;height:1.00px;background:#e4e4e4"></div>
<div class="a" style="left:522.20px;top:377.10px;width:72.70px;height:1.00px;background:#e4e4e4"></div>
<div class="a" style="left:601.50px;top:377.10px;width:72.40px;height:1.00px;background:#e4e4e4"></div>
<div class="a" style="left:680.50px;top:377.10px;width:76.50px;height:1.00px;background:#e4e4e4"></div>
<div class="a" style="left:125.00px;top:405.90px;width:17.60px;height:1.00px;background:#e4e4e4"></div>
<div class="a" style="left:149.20px;top:405.90px;width:4.20px;height:1.00px;background:#e4e4e4"></div>
<div class="a" style="left:160.00px;top:405.90px;width:74.70px;height:1.00px;background:#e4e4e4"></div>
<div class="a" style="left:241.30px;top:405.90px;width:72.50px;height:1.00px;background:#e4e4e4"></div>
<div class="a" style="left:320.40px;top:405.90px;width:123.00px;height:1.00px;background:#e4e4e4"></div>
<div class="a" style="left:450.00px;top:405.90px;width:65.60px;height:1.00px;background:#e4e4e4"></div>
<div class="a" style="left:522.20px;top:405.90px;width:72.70px;height:1.00px;background:#e4e4e4"></div>
<div class="a" style="left:601.50px;top:405.90px;width:72.40px;height:1.00px;background:#e4e4e4"></div>
<div class="a" style="left:680.50px;top:405.90px;width:76.50px;height:1.00px;background:#e4e4e4"></div>
<div class="a" style="left:122.00px;top:232.00px;width:1.10px;height:196.00px;background:#d6d8dc"></div>
</div>
</body></html>
